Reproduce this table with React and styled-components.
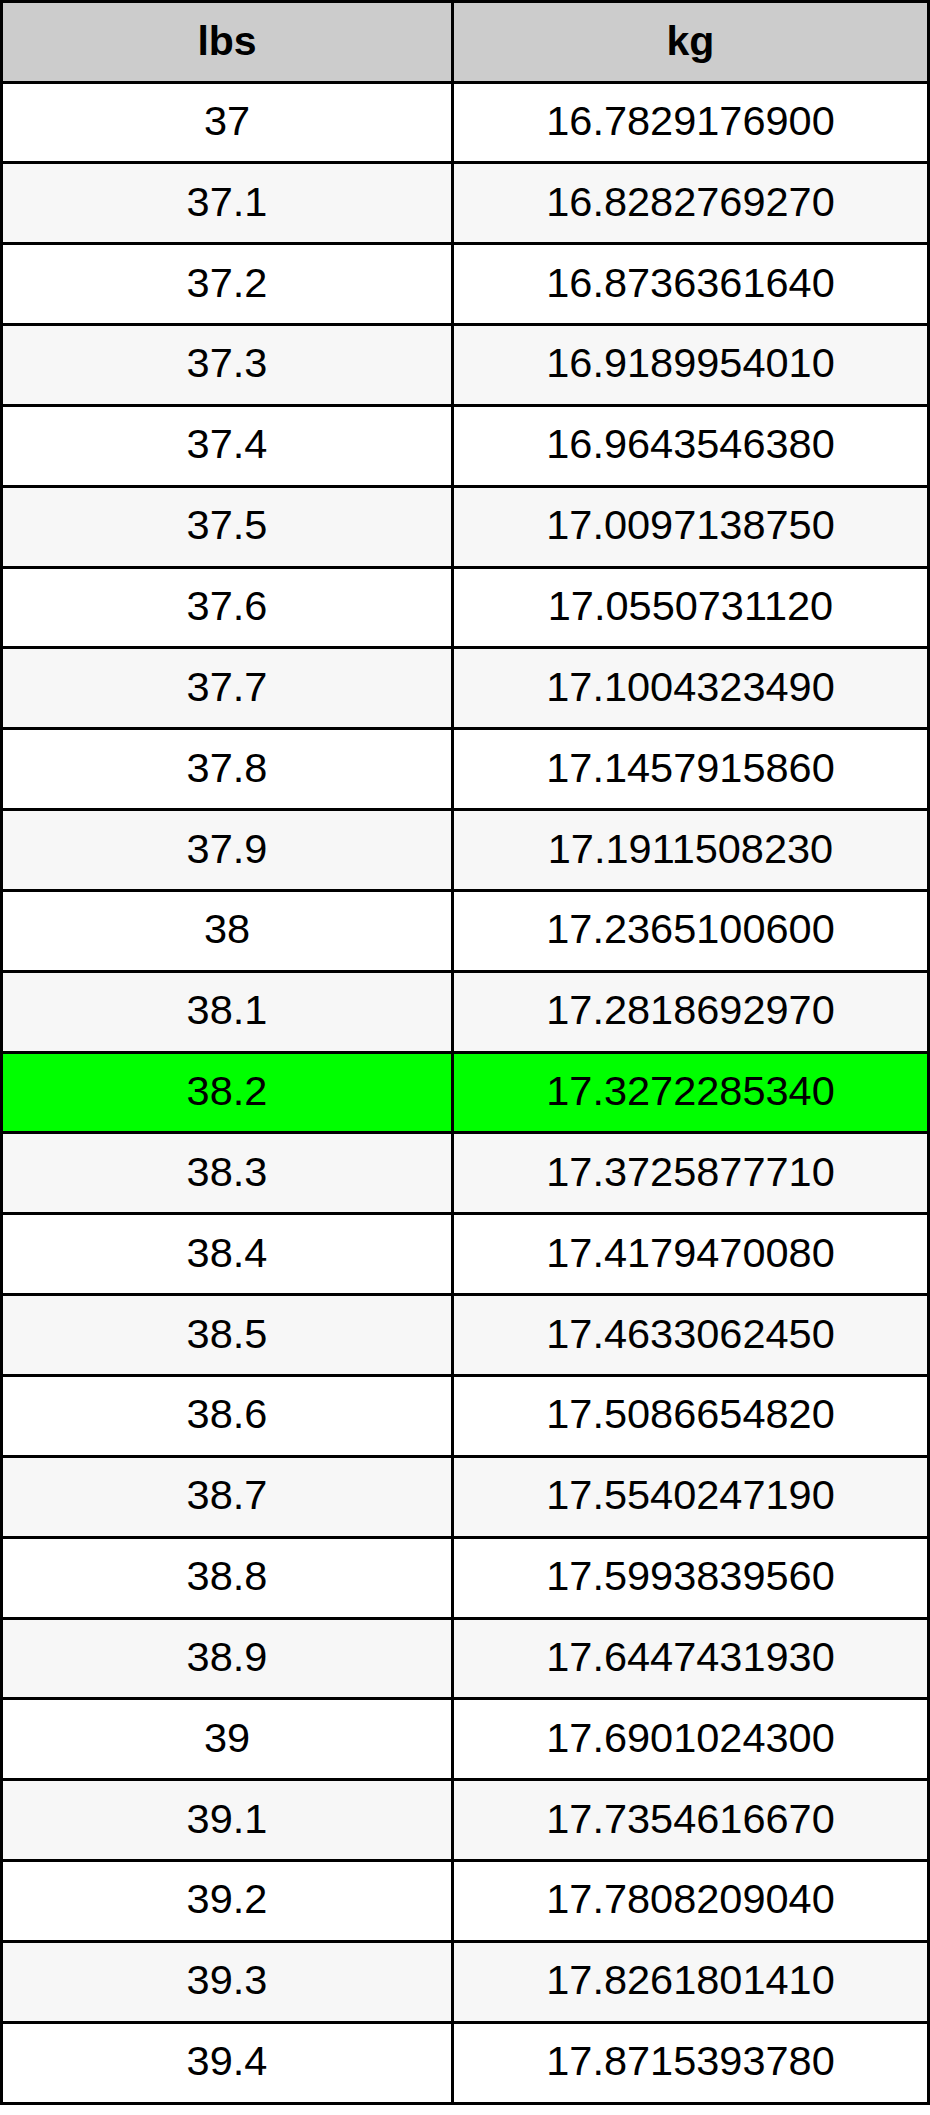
import React from 'react'
import styled, { createGlobalStyle } from 'styled-components'

const GlobalStyle = createGlobalStyle`
    html, body {
        margin: 0;
        padding: 0;
        background: #ffffff;
    }
    body {
        font-family: "Liberation Sans", Arial, Helvetica, sans-serif;
        color: #000000;
    }
`

const rows = [
    ['37', '16.7829176900'],
    ['37.1', '16.8282769270'],
    ['37.2', '16.8736361640'],
    ['37.3', '16.9189954010'],
    ['37.4', '16.9643546380'],
    ['37.5', '17.0097138750'],
    ['37.6', '17.0550731120'],
    ['37.7', '17.1004323490'],
    ['37.8', '17.1457915860'],
    ['37.9', '17.1911508230'],
    ['38', '17.2365100600'],
    ['38.1', '17.2818692970'],
    ['38.2', '17.3272285340'],
    ['38.3', '17.3725877710'],
    ['38.4', '17.4179470080'],
    ['38.5', '17.4633062450'],
    ['38.6', '17.5086654820'],
    ['38.7', '17.5540247190'],
    ['38.8', '17.5993839560'],
    ['38.9', '17.6447431930'],
    ['39', '17.6901024300'],
    ['39.1', '17.7354616670'],
    ['39.2', '17.7808209040'],
    ['39.3', '17.8261801410'],
    ['39.4', '17.8715393780'],
]

const HIGHLIGHT = '38.2'

export default function App() {
    return (
        <>
            <GlobalStyle />
            <Table>
                <HeadCell>lbs</HeadCell>
                <HeadCell>kg</HeadCell>
                {rows.map(([lbs, kg], i) => {
                    const tone = lbs === HIGHLIGHT ? 'hit' : i % 2 ? 'alt' : 'plain'
                    return (
                        <React.Fragment key={lbs}>
                            <Cell $tone={tone}>{lbs}</Cell>
                            <Cell $tone={tone}>{kg}</Cell>
                        </React.Fragment>
                    )
                })}
            </Table>
        </>
    )
}

const tones = {
    plain: '#ffffff',
    alt: '#f7f7f7',
    hit: '#00ff00',
}

const Table = styled.div`
    display: grid;
    grid-template-columns: 451px 476px;
    width: 930px;
    box-sizing: border-box;
    border-top: 3px solid #000;
    border-left: 3px solid #000;
`

const Cell = styled.div`
    display: flex;
    align-items: center;
    justify-content: center;
    box-sizing: border-box;
    height: 80.85px;
    padding-bottom: 3px;
    border-right: 3px solid #000;
    border-bottom: 3px solid #000;
    background: ${p => tones[p.$tone]};
    font-size: 41.5px;
`

const HeadCell = styled(Cell)`
    height: 80.5px;
    background: #cccccc;
    font-weight: bold;
    font-size: 41px;
    padding-bottom: 1px;
`
